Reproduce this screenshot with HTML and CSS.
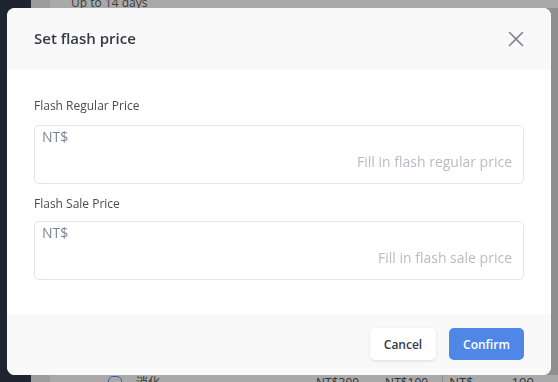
FILE: index.html
```html
<!DOCTYPE html>
<html lang="en">
<head>
<meta charset="utf-8">
<title>Set flash price</title>
<link rel="stylesheet" href="styles.css">
</head>
<body>
<div class="page">
  <div class="sidebar"></div>
  <div class="gutter"></div>
  <div class="main">
    <div class="top-row"><span class="hint">Up to 14 days</span></div>
    <div class="filler"></div>
    <div class="bottom-row">
      <span class="check"></span>
      <span class="name">消化</span>
      <span class="p1">NT$300</span>
      <span class="p2">NT$100</span>
      <span class="cell"><span>NT$</span><span>100</span></span>
    </div>
  </div>
</div>
<div class="modal">
  <div class="modal-header">
    <h2 class="modal-title">Set flash price</h2>
    <button class="close" aria-label="Close">
      <svg width="16" height="16" viewBox="0 0 16 16"><path d="M1.5 1.5 L14.5 14.5 M14.5 1.5 L1.5 14.5" stroke="#7d8497" stroke-width="1.6" fill="none" stroke-linecap="round"/></svg>
    </button>
  </div>
  <div class="modal-body">
    <label class="field-label">Flash Regular Price</label>
    <div class="price-box">
      <span class="prefix">NT$</span>
      <input class="price-input" type="text" placeholder="Fill in flash regular price">
    </div>
    <label class="field-label second">Flash Sale Price</label>
    <div class="price-box">
      <span class="prefix">NT$</span>
      <input class="price-input" type="text" placeholder="Fill in flash sale price">
    </div>
  </div>
  <div class="modal-footer">
    <button class="btn btn-cancel">Cancel</button>
    <button class="btn btn-confirm">Confirm</button>
  </div>
</div>
</body>
</html>
```
FILE: styles.css
```css
* { box-sizing: border-box; }
html, body {
  margin: 0;
  width: 558px;
  height: 382px;
  overflow: hidden;
  font-family: "Open Sans", "Noto Sans", "Noto Sans CJK SC", sans-serif;
}
.page {
  display: grid;
  grid-template-columns: 31px 19px 1fr;
  height: 382px;
  background: #a8a8a8;
}
.sidebar { background: #1f2431; }
.gutter { background: #9c9c9c; }
.main {
  display: flex;
  flex-direction: column;
  background: #a9a9a9;
}
.top-row {
  height: 8px;
  overflow: visible;
  padding-left: 21px;
  font-size: 12px;
  line-height: 12px;
  color: #3c3c3c;
}
.hint { position: relative; top: -3px; }
.filler { flex: 1; background: #8f8f8f; }
.bottom-row {
  height: 7px;
  display: flex;
  align-items: flex-start;
  font-size: 12px;
  line-height: 14px;
  color: #333;
  overflow: hidden;
}
.check {
  margin: 1px 0 0 58px;
  width: 14px;
  height: 14px;
  border: 1.5px solid #3d5fa8;
  border-radius: 5px;
}
.name { margin-left: 14px; margin-top: 1px; }
.p1 { margin-left: 156px; margin-top: 1px; }
.p2 { margin-left: 26px; margin-top: 1px; }
.cell {
  margin-left: 14px;
  border-left: 1px solid #8a8a8a;
  display: flex;
  gap: 38px;
  padding-left: 6px;
  font-size: 13px;
}
.modal {
  position: fixed;
  left: 7px;
  top: 8px;
  width: 544px;
  height: 367px;
  background: #fff;
  border-radius: 8px;
  overflow: hidden;
  display: flex;
  flex-direction: column;
}
.modal-header {
  height: 62px;
  flex: none;
  background: #f9f9f9;
  display: flex;
  align-items: center;
  justify-content: space-between;
  padding: 0 27px 0 27px;
}
.modal-title {
  margin: 0;
  font-size: 15px;
  font-weight: 600;
  color: #343a46;
  position: relative;
  top: -1px;
}
.close {
  border: 0;
  background: none;
  padding: 0;
  width: 16px;
  height: 16px;
  display: flex;
}
.modal-body {
  flex: 1;
  display: flex;
  flex-direction: column;
  padding: 26px 27px 0 27px;
}
.field-label {
  font-size: 12px;
  line-height: 20px;
  color: #474b54;
  margin-bottom: 9px;
}
.field-label.second { margin-top: 10px; margin-bottom: 7px; }
.price-box {
  height: 59px;
  border: 1px solid #e2e5ea;
  border-radius: 5px;
  display: flex;
  flex-direction: column;
  padding: 2px 11px 0 7px;
}
.prefix {
  font-size: 14px;
  line-height: 18px;
  color: #7c8494;
}
.price-input {
  border: 0;
  outline: none;
  background: transparent;
  font-family: inherit;
  font-size: 14px;
  text-align: right;
  padding: 6px 0 0 0;
  color: #333;
}
.price-input::placeholder { color: #b6bbc6; }
.modal-footer {
  height: 61px;
  flex: none;
  background: #f9f9f9;
  display: flex;
  justify-content: flex-end;
  align-items: flex-start;
  gap: 13px;
  padding: 14px 27px 0 0;
}
.btn {
  height: 32px;
  border-radius: 5px;
  font-family: inherit;
  font-size: 12px;
  font-weight: 600;
  padding: 0;
  border: 0;
}
.btn-cancel {
  background: #fff;
  color: #343a46;
  box-shadow: 0 1px 3px rgba(0,0,0,0.12);
  width: 66px;
}
.btn-confirm {
  background: #4f87e6;
  color: #fff;
  width: 75px;
}
```
